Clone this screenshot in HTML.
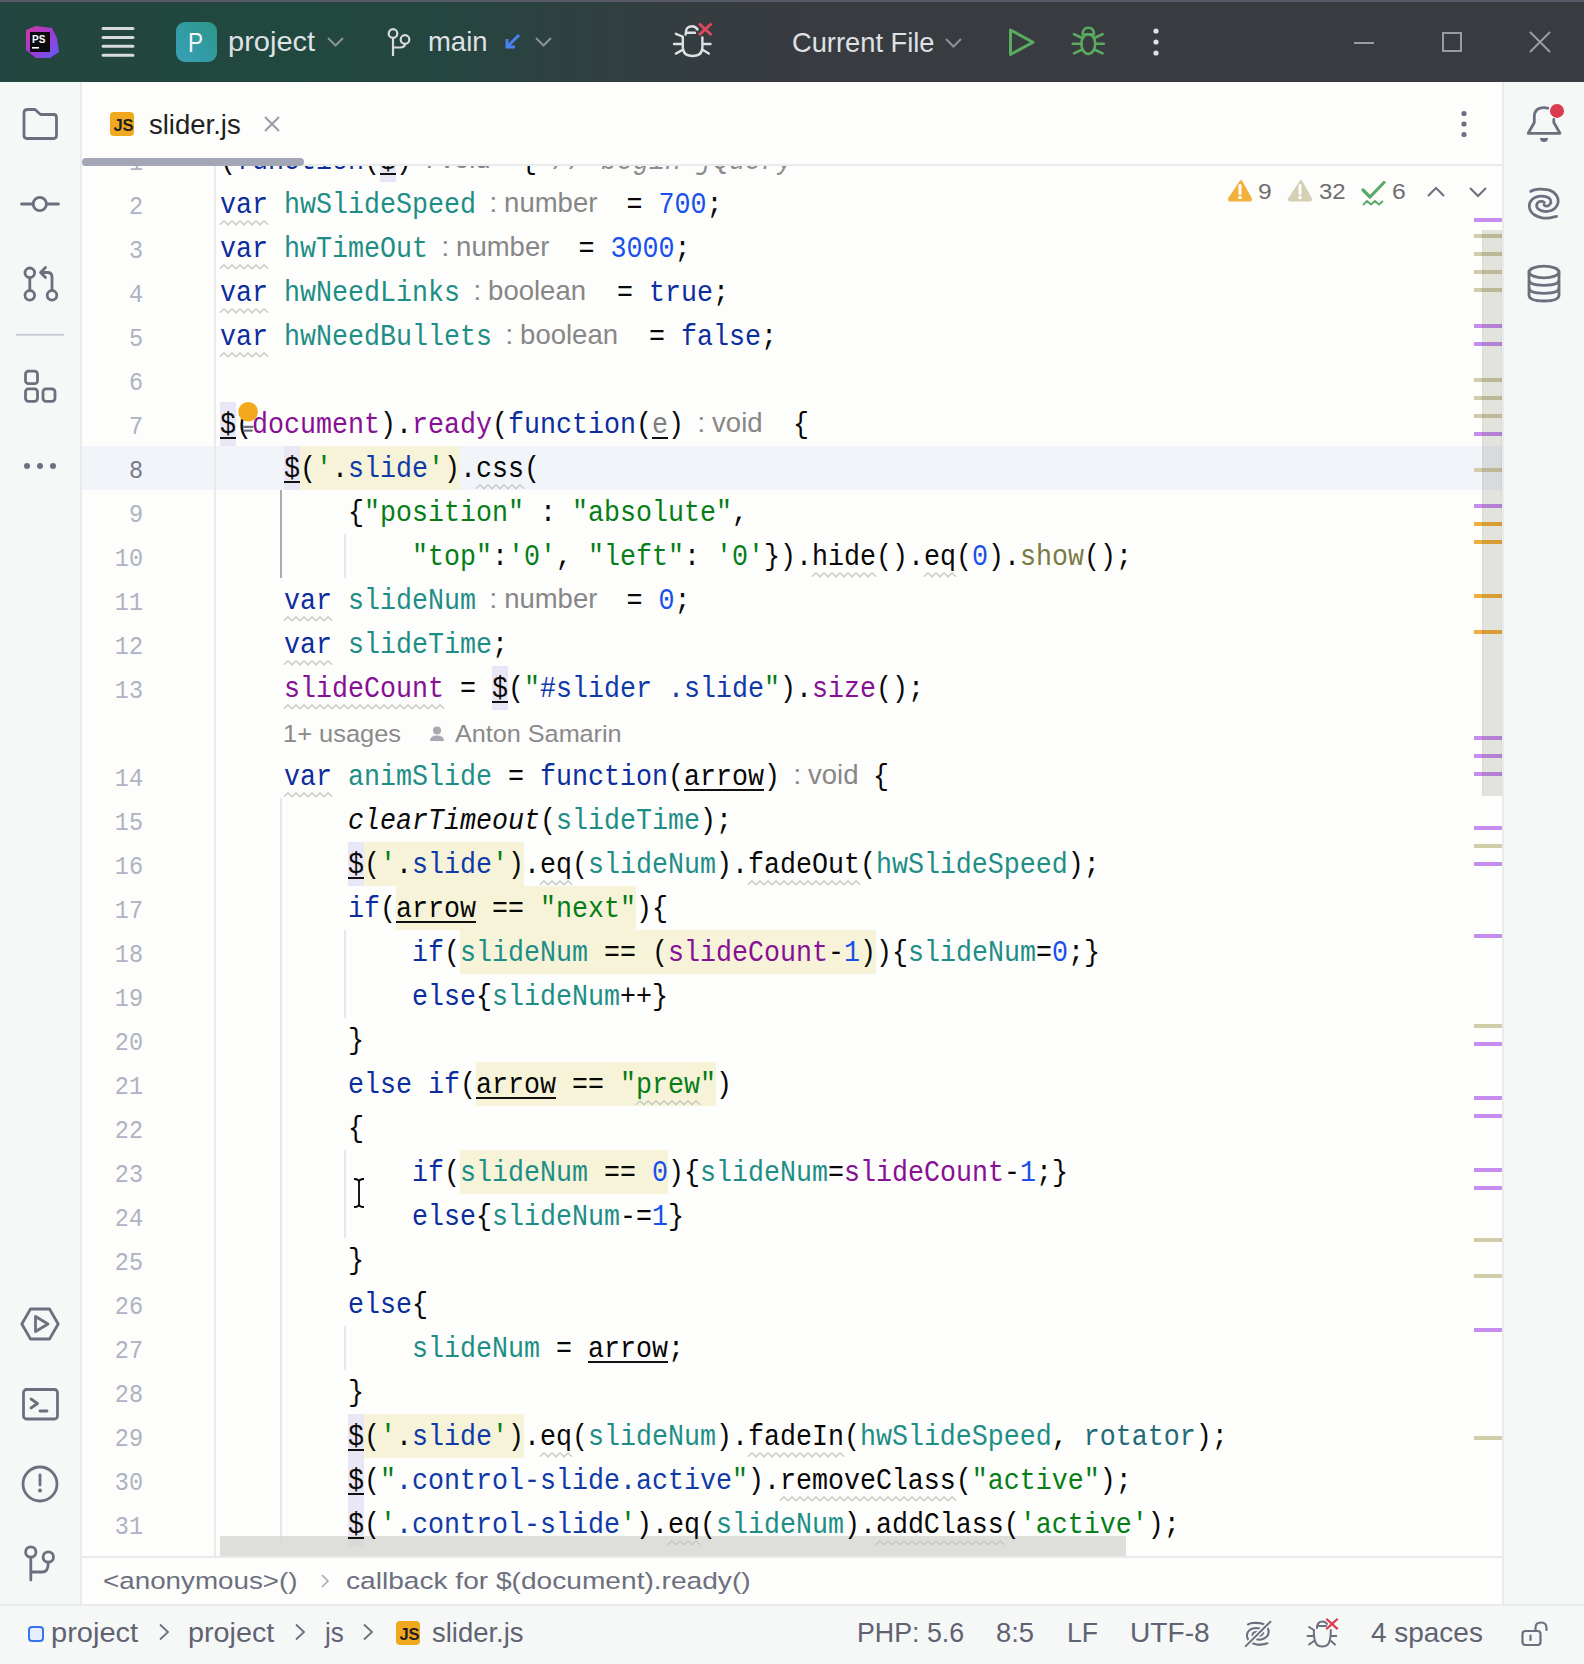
<!DOCTYPE html><html><head><meta charset="utf-8"><style>
*{margin:0;padding:0;box-sizing:border-box}
html,body{width:1584px;height:1664px;overflow:hidden;background:#fdfdfb;font-family:"Liberation Sans",sans-serif}
.a{position:absolute}
svg.a{overflow:visible}
#top{left:0;top:0;width:1584px;height:82px;background:linear-gradient(90deg,#23453f 0px,#21483f 300px,#254640 440px,#2d4140 560px,#343d40 680px,#383b40 800px,#393b40 1584px)}
#topline{left:0;top:0;width:1584px;height:2px;background:#585b66}
.ht{color:#dfe1e5;font-size:27px;line-height:27px;white-space:pre}
#lsb{left:0;top:82px;width:82px;height:1522px;background:#f6f7f7;border-right:2px solid #e9eaeb}
#rsb{left:1502px;top:82px;width:82px;height:1522px;background:#f6f7f7;border-left:2px solid #e9eaeb}
#tabs{left:82px;top:82px;width:1420px;height:84px;background:#fdfdfb;border-bottom:2px solid #e9eaeb}
#editor{left:82px;top:166px;width:1420px;height:1390px;background:#fdfdfb;overflow:hidden}
#crumbs{left:82px;top:1556px;width:1420px;height:48px;background:#fdfdfb;border-top:2px solid #e9eaeb}
#status{left:0;top:1604px;width:1584px;height:60px;background:#f6f7f7;border-top:2px solid #e9eaeb}
.st{font-size:26.5px;color:#5f6371;line-height:27px;white-space:pre}
.ln{position:absolute;width:60px;text-align:right;font-family:"Liberation Mono",monospace;font-size:23.5px;color:#aeb3c2;line-height:44px;transform-origin:0 28.3px;transform:translate(1px,2.5px) scaleY(1.13)}
.cl{position:absolute;left:139px;height:44px;line-height:44px;font-family:"Liberation Mono",monospace;font-size:26.667px;color:#080808;white-space:pre;transform-origin:0 29.1px;transform:scaleY(1.1)}
.un{color:#7f7f7f}.k{color:#0c2d9e}.g{color:#1d8e86}.n{color:#1750eb}.s{color:#067d17}.p{color:#871094}.sel{color:#0f3aa8}.ol{color:#7a7a43}.rt{color:#1f6b78}
.it{font-style:italic}
.hint{display:inline-block;font-family:"Liberation Sans",sans-serif;font-size:27.5px;color:#878787;vertical-align:top;padding-left:13.5px;position:relative;top:-3px;transform-origin:0 29px;transform:scaleY(0.909)}.hc{margin-right:7px}.cm{color:#8c8c8c;font-style:italic}
.ul{text-decoration:underline;text-underline-offset:5px;text-decoration-thickness:1.5px}
.bgy{background:#f6f2d6}
.bgl{background:#e8e5f5}

</style></head><body>
<div id="top" class="a"></div><div id="topline" class="a"></div>
<svg class="a" style="left:22px;top:24px" width="38" height="36" viewBox="0 0 38 36">
<defs><linearGradient id="psg" x1="0" y1="0" x2="1" y2="1"><stop offset="0" stop-color="#d33a9a"/><stop offset="0.5" stop-color="#9f3ad8"/><stop offset="1" stop-color="#5c5ef0"/></linearGradient></defs>
<path d="M4 6 L14 2 L30 4 L35 14 L37 28 L28 34 L14 34 L4 26 Z" fill="url(#psg)"/>
<rect x="8" y="8" width="20" height="20" fill="#0a0a0f"/>
<text x="10" y="18.5" font-family="Liberation Sans" font-weight="bold" font-size="10" fill="#fff">PS</text>
<rect x="10" y="23" width="7" height="1.6" fill="#fff"/>
</svg>
<svg class="a" style="left:100px;top:26px" width="36" height="32"><g stroke="#d9dade" stroke-width="3" stroke-linecap="round"><path d="M3 2.5H33M3 11.5H33M3 20.3H33M3 29.2H33"/></g></svg>
<div class="a" style="left:176px;top:22px;width:41px;height:40px;border-radius:9px;background:linear-gradient(45deg,#3aa0b8,#2b968a)"></div>

<div class="a" style="left:188.25px;top:28.52px;font-family:'Liberation Sans';font-size:27.5px;line-height:27.5px;color:#f4f6f8;white-space:pre;transform-origin:0 0;transform:scaleX(0.8199);">P</div>
<div class="a" style="left:227.83px;top:28.30px;font-family:'Liberation Sans';font-size:28px;line-height:28px;color:#dfe1e5;white-space:pre;transform-origin:0 0;transform:scaleX(1.0374);">project</div>
<svg class="a" style="left:326px;top:36px" width="20" height="12"><path d="M2 2 L9.5 9.5 L17 2" fill="none" stroke="#8d9097" stroke-width="2"/></svg>
<svg class="a" style="left:384px;top:26px" width="30" height="32"><g fill="none" stroke="#d9dade" stroke-width="2.2"><circle cx="9" cy="7.5" r="4.3"/><circle cx="21" cy="13.5" r="4.3"/><path d="M9 12 V30 M9 21.5 H16 Q21 21.5 21 17.8"/></g></svg>
<div class="a" style="left:427.88px;top:27.80px;font-family:'Liberation Sans';font-size:28px;line-height:28px;color:#dfe1e5;white-space:pre;transform-origin:0 0;transform:scaleX(0.9805);">main</div>
<svg class="a" style="left:503px;top:32px" width="20" height="18"><path d="M16 3 L5 14 M4 7 V15 H12" fill="none" stroke="#4a82f0" stroke-width="3"/></svg>
<svg class="a" style="left:534px;top:36px" width="20" height="12"><path d="M2 2 L9.5 9.5 L17 2" fill="none" stroke="#8d9097" stroke-width="2"/></svg>
<svg class="a" style="left:670px;top:20px" width="46" height="42"><g fill="none" stroke="#dfe1e5" stroke-width="2.4" stroke-linecap="round">
<path d="M12.8 17 V27 Q12.8 36 22.6 36 Q32.4 36 32.4 27 V17.5"/>
<path d="M15.6 14.5 Q15.4 6.3 22 6.3 Q25.5 6.3 27.5 9.5 M17.5 12.8 H25"/>
<path d="M4 24 H12.6 M33 24 H40.5 M5.9 13.8 L12.4 16.5 M5.9 33.6 L12.3 30 M33 30 L38.8 33.6"/></g>
<path d="M29 3.5 L41.5 15 M41.5 3.5 L29 15" stroke="#e0475e" stroke-width="3"/></svg>
<div class="a" style="left:791.81px;top:28.62px;font-family:'Liberation Sans';font-size:27.5px;line-height:27.5px;color:#dfe1e5;white-space:pre;transform-origin:0 0;transform:scaleX(0.9920);">Current File</div>
<svg class="a" style="left:944px;top:37px" width="20" height="12"><path d="M2 2 L9.5 9.5 L17 2" fill="none" stroke="#8d9097" stroke-width="2"/></svg>
<svg class="a" style="left:1006px;top:26px" width="32" height="32"><path d="M4.5 4 L4.5 28.5 L27 16.2 Z" fill="none" stroke="#5aab61" stroke-width="3" stroke-linejoin="round"/></svg>
<svg class="a" style="left:1070px;top:25px" width="38" height="34"><g fill="none" stroke="#5aab61" stroke-width="2.6" stroke-linecap="round" stroke-linejoin="round">
<ellipse cx="18.3" cy="19.1" rx="6.9" ry="9.9"/>
<path d="M12.6 9.5 Q12.6 2.8 18.3 2.8 Q24 2.8 24 9.5 Z"/>
<path d="M4 9.2 L11.7 12.8 M2.7 18.8 H11.5 M4 28.4 L11.7 24.8 M32.6 9.2 L24.9 12.8 M33.9 18.8 H25.1 M32.6 28.4 L24.9 24.8"/></g></svg>
<svg class="a" style="left:1150px;top:26px" width="12" height="32"><g fill="#dfe1e5"><circle cx="6" cy="5" r="2.6"/><circle cx="6" cy="16" r="2.6"/><circle cx="6" cy="27" r="2.6"/></g></svg>
<div class="a" style="left:1354px;top:42px;width:20px;height:2px;background:#9a9ca3"></div>
<div class="a" style="left:1442px;top:32px;width:20px;height:20px;border:2px solid #9a9ca3"></div>
<svg class="a" style="left:1528px;top:30px" width="24" height="24"><path d="M2 2 L22 22 M22 2 L2 22" stroke="#9a9ca3" stroke-width="2"/></svg>
<div id="lsb" class="a"></div><div id="rsb" class="a"></div><div id="tabs" class="a"></div>
<svg class="a" style="left:0;top:82px" width="80" height="1522"><g fill="none" stroke="#6c707e" stroke-width="2.8" stroke-linecap="round" stroke-linejoin="round">
<path d="M24 31 Q24 27.5 27.5 27.5 H35 L40.5 32.5 H53.5 Q56.5 32.5 56.5 35.5 V53.5 Q56.5 56.5 53.5 56.5 H27 Q24 56.5 24 53.5 Z"/>
<path d="M21.5 122 H33 M46.5 122 H58.5"/><circle cx="39.8" cy="122" r="6.6"/>
<circle cx="29.8" cy="190.8" r="4.8"/><circle cx="29.8" cy="213.3" r="4.8"/><circle cx="52" cy="213.3" r="4.8"/>
<path d="M29.8 195.6 V208.5 M52 208.5 V195 Q52 190.5 47.5 190.5 H41 M45.5 185.5 L40.5 190.5 L45.5 195.5"/>
<rect x="25.5" y="289.2" width="12" height="12.5" rx="3"/><rect x="25.5" y="306.8" width="12" height="12.5" rx="3"/><rect x="43" y="306.8" width="12" height="12.5" rx="3"/>
<path d="M21.8 1242 L30.5 1227 H49.5 L58.2 1242 L49.5 1257 H30.5 Z"/><path d="M35.5 1234.5 V1249.5 L48 1242 Z"/>
<rect x="23.5" y="1307.5" width="34" height="29.5" rx="3"/><path d="M31 1317 L37.5 1321.5 L31 1326 M40 1329 H47"/>
<circle cx="40" cy="1402" r="17"/><path d="M40 1393 V1403"/>
<circle cx="30.8" cy="1470" r="5.2"/><circle cx="48.3" cy="1475" r="5.2"/><path d="M30.8 1475.2 V1498 M30.8 1490 H42.5 Q48.3 1490 48.3 1480.2"/>
</g>
<path d="M16 252.8 H64" stroke="#c9ccd6" stroke-width="2"/>
<g fill="#6c707e"><circle cx="27" cy="384" r="3"/><circle cx="40" cy="384" r="3"/><circle cx="53" cy="384" r="3"/><circle cx="40" cy="1408.5" r="2"/></g>
</svg>
<svg class="a" style="left:1502px;top:82px" width="82" height="1522"><g fill="none" stroke="#6c707e" stroke-width="2.8" stroke-linecap="round" stroke-linejoin="round">
<path d="M45.8 26.2 Q43.5 25.6 42 25.6 Q32.3 25.6 32.3 35 V40.5 L26.2 51.3 H58 L51.8 40.5 V37.5"/>
<path d="M42.31 120.57 C41.94 120.38 41.00 119.59 40.10 119.46 C39.20 119.33 37.84 119.25 36.94 119.78 C36.04 120.31 34.94 121.52 34.73 122.62 C34.52 123.73 34.78 125.36 35.68 126.41 C36.58 127.46 38.31 128.46 40.10 128.93 C41.89 129.40 44.31 129.67 46.41 129.25 C48.51 128.83 51.09 127.94 52.72 126.41 C54.35 124.88 55.93 122.31 56.19 120.10 C56.45 117.89 55.67 115.10 54.30 113.15 C52.93 111.20 50.62 109.42 47.99 108.42 C45.36 107.42 41.15 107.26 38.52 107.15 C35.89 107.05 33.83 107.42 32.20 107.79 C30.57 108.16 29.31 109.10 28.73 109.36"/>
<path d="M41.99 122.94 C42.36 123.15 43.36 124.15 44.20 124.20 C45.04 124.25 46.25 123.93 47.04 123.25 C47.83 122.57 48.88 121.26 48.93 120.10 C48.98 118.94 48.41 117.26 47.36 116.31 C46.31 115.36 44.46 114.73 42.62 114.41 C40.78 114.09 38.31 113.99 36.31 114.41 C34.31 114.83 32.10 115.68 30.63 116.94 C29.16 118.20 27.89 120.15 27.47 121.99 C27.05 123.83 27.31 126.20 28.10 127.99 C28.89 129.78 30.20 131.41 32.20 132.72 C34.20 134.03 37.47 135.35 40.10 135.88 C42.73 136.41 45.57 136.14 47.99 135.88 C50.41 135.62 53.52 134.56 54.62 134.30"/>
<ellipse cx="42" cy="190" rx="15" ry="5.8"/><path d="M27 190 V213 Q27 219 42 219 Q57 219 57 213 V190 M27 197.5 Q27 203.3 42 203.3 Q57 203.3 57 197.5 M27 205.5 Q27 211.3 42 211.3 Q57 211.3 57 205.5"/>
</g>
<path d="M38 56 H46 Q46 60 42 60 Q38 60 38 56 Z" fill="#6c707e"/>
<circle cx="55" cy="28.9" r="7" fill="#db3b4b"/>
</svg>
<div id="ed" class="a" style="left:82px;top:166px;width:1420px;height:1390px;overflow:hidden"><div class="a" style="left:-82px;top:-166px;width:1584px;height:1664px">
<div class="a" style="left:82px;top:446px;width:1420px;height:44px;background:#f1f4f8"></div>
<div class="a" style="left:214px;top:0;width:2px;height:1664px;background:#e9eaeb"></div>
<div class="a" style="left:380.0px;top:138px;width:16.0px;height:44px;background:#e9e6f5"></div><div class="a" style="left:220px;top:402px;width:16.0px;height:44px;background:#e9e6f5"></div><div class="a" style="left:284.0px;top:446px;width:16.0px;height:44px;background:#e9e6f5"></div><div class="a" style="left:300.0px;top:446px;width:160.0px;height:44px;background:#f6f3d9"></div><div class="a" style="left:492.0px;top:666px;width:16.0px;height:44px;background:#e9e6f5"></div><div class="a" style="left:348.0px;top:842px;width:16.0px;height:44px;background:#e9e6f5"></div><div class="a" style="left:364.0px;top:842px;width:160.0px;height:44px;background:#f6f3d9"></div><div class="a" style="left:396.0px;top:886px;width:240.0px;height:44px;background:#f6f3d9"></div><div class="a" style="left:460.0px;top:930px;width:416.0px;height:44px;background:#f6f3d9"></div><div class="a" style="left:476.0px;top:1062px;width:240.0px;height:44px;background:#f6f3d9"></div><div class="a" style="left:460.0px;top:1150px;width:208.0px;height:44px;background:#f6f3d9"></div><div class="a" style="left:348.0px;top:1414px;width:16.0px;height:44px;background:#e9e6f5"></div><div class="a" style="left:364.0px;top:1414px;width:160.0px;height:44px;background:#f6f3d9"></div><div class="a" style="left:348.0px;top:1458px;width:16.0px;height:44px;background:#e9e6f5"></div><div class="a" style="left:348.0px;top:1502px;width:16.0px;height:44px;background:#e9e6f5"></div>
<div class="a" style="left:280px;top:490px;width:2px;height:88px;background:#a8abb6"></div>
<div class="a" style="left:344px;top:534px;width:2px;height:44px;background:#e6e7ea"></div>
<div class="a" style="left:280px;top:798px;width:2px;height:748px;background:#e6e7ea"></div>
<div class="a" style="left:344px;top:930px;width:2px;height:88px;background:#e6e7ea"></div>
<div class="a" style="left:344px;top:1150px;width:2px;height:88px;background:#e6e7ea"></div>
<div class="a" style="left:344px;top:1326px;width:2px;height:44px;background:#e6e7ea"></div>
<div class="ln" style="left:82px;top:140px;color:#aeb3c2">1</div>
<div class="ln" style="left:82px;top:184px;color:#aeb3c2">2</div>
<div class="ln" style="left:82px;top:228px;color:#aeb3c2">3</div>
<div class="ln" style="left:82px;top:272px;color:#aeb3c2">4</div>
<div class="ln" style="left:82px;top:316px;color:#aeb3c2">5</div>
<div class="ln" style="left:82px;top:360px;color:#aeb3c2">6</div>
<div class="ln" style="left:82px;top:404px;color:#aeb3c2">7</div>
<div class="ln" style="left:82px;top:448px;color:#767a8a">8</div>
<div class="ln" style="left:82px;top:492px;color:#aeb3c2">9</div>
<div class="ln" style="left:82px;top:536px;color:#aeb3c2">10</div>
<div class="ln" style="left:82px;top:580px;color:#aeb3c2">11</div>
<div class="ln" style="left:82px;top:624px;color:#aeb3c2">12</div>
<div class="ln" style="left:82px;top:668px;color:#aeb3c2">13</div>
<div class="ln" style="left:82px;top:756px;color:#aeb3c2">14</div>
<div class="ln" style="left:82px;top:800px;color:#aeb3c2">15</div>
<div class="ln" style="left:82px;top:844px;color:#aeb3c2">16</div>
<div class="ln" style="left:82px;top:888px;color:#aeb3c2">17</div>
<div class="ln" style="left:82px;top:932px;color:#aeb3c2">18</div>
<div class="ln" style="left:82px;top:976px;color:#aeb3c2">19</div>
<div class="ln" style="left:82px;top:1020px;color:#aeb3c2">20</div>
<div class="ln" style="left:82px;top:1064px;color:#aeb3c2">21</div>
<div class="ln" style="left:82px;top:1108px;color:#aeb3c2">22</div>
<div class="ln" style="left:82px;top:1152px;color:#aeb3c2">23</div>
<div class="ln" style="left:82px;top:1196px;color:#aeb3c2">24</div>
<div class="ln" style="left:82px;top:1240px;color:#aeb3c2">25</div>
<div class="ln" style="left:82px;top:1284px;color:#aeb3c2">26</div>
<div class="ln" style="left:82px;top:1328px;color:#aeb3c2">27</div>
<div class="ln" style="left:82px;top:1372px;color:#aeb3c2">28</div>
<div class="ln" style="left:82px;top:1416px;color:#aeb3c2">29</div>
<div class="ln" style="left:82px;top:1460px;color:#aeb3c2">30</div>
<div class="ln" style="left:82px;top:1504px;color:#aeb3c2">31</div>
<div class="a" style="left:220px;top:1536px;width:906px;height:20px;background:rgba(214,214,211,0.8)"></div>
<div class="cl" style="left:220px;top:140.4px">(<span class="k">function</span>($)<span class="hint" style="width:93px"><span class="hc">:</span>void</span> {<span class="cm"> // begin jQuery</span></div><div class="cl" style="left:220px;top:184.4px"><span class="k">var</span> <span class="g">hwSlideSpeed</span><span class="hint" style="width:134.5px"><span class="hc">:</span>number</span> = <span class="n">700</span>;</div><div class="cl" style="left:220px;top:228.4px"><span class="k">var</span> <span class="g">hwTimeOut</span><span class="hint" style="width:134.5px"><span class="hc">:</span>number</span> = <span class="n">3000</span>;</div><div class="cl" style="left:220px;top:272.4px"><span class="k">var</span> <span class="g">hwNeedLinks</span><span class="hint" style="width:141px"><span class="hc">:</span>boolean</span> = <span class="k">true</span>;</div><div class="cl" style="left:220px;top:316.4px"><span class="k">var</span> <span class="g">hwNeedBullets</span><span class="hint" style="width:141px"><span class="hc">:</span>boolean</span> = <span class="k">false</span>;</div><div class="cl" style="left:220px;top:360.4px"></div><div class="cl" style="left:220px;top:404.4px">$(<span class="p">document</span>).<span class="p">ready</span>(<span class="k">function</span>(<span class="un">e</span>)<span class="hint" style="width:93px"><span class="hc">:</span>void</span> {</div><div class="cl" style="left:220px;top:448.4px">    $(<span class="s">&#x27;</span>.<span class="sel">slide</span><span class="s">&#x27;</span>).css(</div><div class="cl" style="left:220px;top:492.4px">        {<span class="s">&quot;position&quot;</span> : <span class="s">&quot;absolute&quot;</span>,</div><div class="cl" style="left:220px;top:536.4px">            <span class="s">&quot;top&quot;</span>:<span class="s">&#x27;0&#x27;</span>, <span class="s">&quot;left&quot;</span>: <span class="s">&#x27;0&#x27;</span>}).hide().eq(<span class="n">0</span>).<span class="ol">show</span>();</div><div class="cl" style="left:220px;top:580.4px">    <span class="k">var</span> <span class="g">slideNum</span><span class="hint" style="width:134.5px"><span class="hc">:</span>number</span> = <span class="n">0</span>;</div><div class="cl" style="left:220px;top:624.4px">    <span class="k">var</span> <span class="g">slideTime</span>;</div><div class="cl" style="left:220px;top:668.4px">    <span class="p">slideCount</span> = $(<span class="s">&quot;</span><span class="sel">#slider .slide</span><span class="s">&quot;</span>).<span class="p">size</span>();</div><div class="cl" style="left:220px;top:756.4px">    <span class="k">var</span> <span class="g">animSlide</span> = <span class="k">function</span>(arrow)<span class="hint" style="width:93px"><span class="hc">:</span>void</span>{</div><div class="cl" style="left:220px;top:800.4px">        <span class="it">clearTimeout</span>(<span class="g">slideTime</span>);</div><div class="cl" style="left:220px;top:844.4px">        $(<span class="s">&#x27;</span>.<span class="sel">slide</span><span class="s">&#x27;</span>).eq(<span class="g">slideNum</span>).fadeOut(<span class="g">hwSlideSpeed</span>);</div><div class="cl" style="left:220px;top:888.4px">        <span class="k">if</span>(arrow == <span class="s">&quot;next&quot;</span>){</div><div class="cl" style="left:220px;top:932.4px">            <span class="k">if</span>(<span class="g">slideNum</span> == (<span class="p">slideCount</span>-<span class="n">1</span>)){<span class="g">slideNum</span>=<span class="n">0</span>;}</div><div class="cl" style="left:220px;top:976.4px">            <span class="k">else</span>{<span class="g">slideNum</span>++}</div><div class="cl" style="left:220px;top:1020.4px">        }</div><div class="cl" style="left:220px;top:1064.4px">        <span class="k">else</span> <span class="k">if</span>(arrow == <span class="s">&quot;</span><span class="s">prew</span><span class="s">&quot;</span>)</div><div class="cl" style="left:220px;top:1108.4px">        {</div><div class="cl" style="left:220px;top:1152.4px">            <span class="k">if</span>(<span class="g">slideNum</span> == <span class="n">0</span>){<span class="g">slideNum</span>=<span class="p">slideCount</span>-<span class="n">1</span>;}</div><div class="cl" style="left:220px;top:1196.4px">            <span class="k">else</span>{<span class="g">slideNum</span>-=<span class="n">1</span>}</div><div class="cl" style="left:220px;top:1240.4px">        }</div><div class="cl" style="left:220px;top:1284.4px">        <span class="k">else</span>{</div><div class="cl" style="left:220px;top:1328.4px">            <span class="g">slideNum</span> = arrow;</div><div class="cl" style="left:220px;top:1372.4px">        }</div><div class="cl" style="left:220px;top:1416.4px">        $(<span class="s">&#x27;</span>.<span class="sel">slide</span><span class="s">&#x27;</span>).eq(<span class="g">slideNum</span>).fadeIn(<span class="g">hwSlideSpeed</span>, <span class="rt">rotator</span>);</div><div class="cl" style="left:220px;top:1460.4px">        $(<span class="s">&quot;</span><span class="sel">.control-slide.active</span><span class="s">&quot;</span>).removeClass(<span class="s">&quot;active&quot;</span>);</div><div class="cl" style="left:220px;top:1504.4px">        $(<span class="s">&#x27;</span><span class="sel">.control-slide</span><span class="s">&#x27;</span>).eq(<span class="g">slideNum</span>).addClass(<span class="s">&#x27;active&#x27;</span>);</div>
<div class="a" style="left:380.0px;top:173.3px;width:16.0px;height:1.3px;background:#111"></div><div class="a" style="left:220px;top:437.3px;width:16.0px;height:1.3px;background:#111"></div><div class="a" style="left:652.0px;top:437.3px;width:16.0px;height:1.3px;background:#111"></div><div class="a" style="left:284.0px;top:481.3px;width:16.0px;height:1.3px;background:#111"></div><div class="a" style="left:492.0px;top:701.3px;width:16.0px;height:1.3px;background:#111"></div><div class="a" style="left:684.0px;top:789.3px;width:80.0px;height:1.3px;background:#111"></div><div class="a" style="left:348.0px;top:877.3px;width:16.0px;height:1.3px;background:#111"></div><div class="a" style="left:396.0px;top:921.3px;width:80.0px;height:1.3px;background:#111"></div><div class="a" style="left:476.0px;top:1097.3px;width:80.0px;height:1.3px;background:#111"></div><div class="a" style="left:588.0px;top:1361.3px;width:80.0px;height:1.3px;background:#111"></div><div class="a" style="left:348.0px;top:1449.3px;width:16.0px;height:1.3px;background:#111"></div><div class="a" style="left:348.0px;top:1493.3px;width:16.0px;height:1.3px;background:#111"></div><div class="a" style="left:348.0px;top:1537.3px;width:16.0px;height:1.3px;background:#111"></div>
<svg class="a" style="left:0;top:0" width="1584" height="1664"><g fill="none" stroke="#c3c7c3" stroke-width="1.25"><path d="M220 224.8 L224 220.8 L228 224.8 L232 220.8 L236 224.8 L240 220.8 L244 224.8 L248 220.8 L252 224.8 L256 220.8 L260 224.8 L264 220.8 L268 224.8"/><path d="M220 268.8 L224 264.8 L228 268.8 L232 264.8 L236 268.8 L240 264.8 L244 268.8 L248 264.8 L252 268.8 L256 264.8 L260 268.8 L264 264.8 L268 268.8"/><path d="M220 312.8 L224 308.8 L228 312.8 L232 308.8 L236 312.8 L240 308.8 L244 312.8 L248 308.8 L252 312.8 L256 308.8 L260 312.8 L264 308.8 L268 312.8"/><path d="M220 356.8 L224 352.8 L228 356.8 L232 352.8 L236 356.8 L240 352.8 L244 356.8 L248 352.8 L252 356.8 L256 352.8 L260 356.8 L264 352.8 L268 356.8"/><path d="M476.0 488.8 L480.0 484.8 L484.0 488.8 L488.0 484.8 L492.0 488.8 L496.0 484.8 L500.0 488.8 L504.0 484.8 L508.0 488.8 L512.0 484.8 L516.0 488.8 L520.0 484.8 L524.0 488.8"/><path d="M812.0 576.8 L816.0 572.8 L820.0 576.8 L824.0 572.8 L828.0 576.8 L832.0 572.8 L836.0 576.8 L840.0 572.8 L844.0 576.8 L848.0 572.8 L852.0 576.8 L856.0 572.8 L860.0 576.8 L864.0 572.8 L868.0 576.8 L872.0 572.8 L876.0 576.8"/><path d="M924.0 576.8 L928.0 572.8 L932.0 576.8 L936.0 572.8 L940.0 576.8 L944.0 572.8 L948.0 576.8 L952.0 572.8 L956.0 576.8"/><path d="M284.0 620.8 L288.0 616.8 L292.0 620.8 L296.0 616.8 L300.0 620.8 L304.0 616.8 L308.0 620.8 L312.0 616.8 L316.0 620.8 L320.0 616.8 L324.0 620.8 L328.0 616.8 L332.0 620.8"/><path d="M284.0 664.8 L288.0 660.8 L292.0 664.8 L296.0 660.8 L300.0 664.8 L304.0 660.8 L308.0 664.8 L312.0 660.8 L316.0 664.8 L320.0 660.8 L324.0 664.8 L328.0 660.8 L332.0 664.8"/><path d="M284.0 708.8 L288.0 704.8 L292.0 708.8 L296.0 704.8 L300.0 708.8 L304.0 704.8 L308.0 708.8 L312.0 704.8 L316.0 708.8 L320.0 704.8 L324.0 708.8 L328.0 704.8 L332.0 708.8 L336.0 704.8 L340.0 708.8 L344.0 704.8 L348.0 708.8 L352.0 704.8 L356.0 708.8 L360.0 704.8 L364.0 708.8 L368.0 704.8 L372.0 708.8 L376.0 704.8 L380.0 708.8 L384.0 704.8 L388.0 708.8 L392.0 704.8 L396.0 708.8 L400.0 704.8 L404.0 708.8 L408.0 704.8 L412.0 708.8 L416.0 704.8 L420.0 708.8 L424.0 704.8 L428.0 708.8 L432.0 704.8 L436.0 708.8 L440.0 704.8 L444.0 708.8"/><path d="M284.0 796.8 L288.0 792.8 L292.0 796.8 L296.0 792.8 L300.0 796.8 L304.0 792.8 L308.0 796.8 L312.0 792.8 L316.0 796.8 L320.0 792.8 L324.0 796.8 L328.0 792.8 L332.0 796.8"/><path d="M540.0 884.8 L544.0 880.8 L548.0 884.8 L552.0 880.8 L556.0 884.8 L560.0 880.8 L564.0 884.8 L568.0 880.8 L572.0 884.8"/><path d="M748.0 884.8 L752.0 880.8 L756.0 884.8 L760.0 880.8 L764.0 884.8 L768.0 880.8 L772.0 884.8 L776.0 880.8 L780.0 884.8 L784.0 880.8 L788.0 884.8 L792.0 880.8 L796.0 884.8 L800.0 880.8 L804.0 884.8 L808.0 880.8 L812.0 884.8 L816.0 880.8 L820.0 884.8 L824.0 880.8 L828.0 884.8 L832.0 880.8 L836.0 884.8 L840.0 880.8 L844.0 884.8 L848.0 880.8 L852.0 884.8 L856.0 880.8 L860.0 884.8"/><path d="M636.0 1104.8 L640.0 1100.8 L644.0 1104.8 L648.0 1100.8 L652.0 1104.8 L656.0 1100.8 L660.0 1104.8 L664.0 1100.8 L668.0 1104.8 L672.0 1100.8 L676.0 1104.8 L680.0 1100.8 L684.0 1104.8 L688.0 1100.8 L692.0 1104.8 L696.0 1100.8 L700.0 1104.8"/><path d="M540.0 1456.8 L544.0 1452.8 L548.0 1456.8 L552.0 1452.8 L556.0 1456.8 L560.0 1452.8 L564.0 1456.8 L568.0 1452.8 L572.0 1456.8"/><path d="M748.0 1456.8 L752.0 1452.8 L756.0 1456.8 L760.0 1452.8 L764.0 1456.8 L768.0 1452.8 L772.0 1456.8 L776.0 1452.8 L780.0 1456.8 L784.0 1452.8 L788.0 1456.8 L792.0 1452.8 L796.0 1456.8 L800.0 1452.8 L804.0 1456.8 L808.0 1452.8 L812.0 1456.8 L816.0 1452.8 L820.0 1456.8 L824.0 1452.8 L828.0 1456.8 L832.0 1452.8 L836.0 1456.8 L840.0 1452.8 L844.0 1456.8"/><path d="M780.0 1500.8 L784.0 1496.8 L788.0 1500.8 L792.0 1496.8 L796.0 1500.8 L800.0 1496.8 L804.0 1500.8 L808.0 1496.8 L812.0 1500.8 L816.0 1496.8 L820.0 1500.8 L824.0 1496.8 L828.0 1500.8 L832.0 1496.8 L836.0 1500.8 L840.0 1496.8 L844.0 1500.8 L848.0 1496.8 L852.0 1500.8 L856.0 1496.8 L860.0 1500.8 L864.0 1496.8 L868.0 1500.8 L872.0 1496.8 L876.0 1500.8 L880.0 1496.8 L884.0 1500.8 L888.0 1496.8 L892.0 1500.8 L896.0 1496.8 L900.0 1500.8 L904.0 1496.8 L908.0 1500.8 L912.0 1496.8 L916.0 1500.8 L920.0 1496.8 L924.0 1500.8 L928.0 1496.8 L932.0 1500.8 L936.0 1496.8 L940.0 1500.8 L944.0 1496.8 L948.0 1500.8 L952.0 1496.8 L956.0 1500.8"/><path d="M668.0 1544.8 L672.0 1540.8 L676.0 1544.8 L680.0 1540.8 L684.0 1544.8 L688.0 1540.8 L692.0 1544.8 L696.0 1540.8 L700.0 1544.8"/><path d="M876.0 1544.8 L880.0 1540.8 L884.0 1544.8 L888.0 1540.8 L892.0 1544.8 L896.0 1540.8 L900.0 1544.8 L904.0 1540.8 L908.0 1544.8 L912.0 1540.8 L916.0 1544.8 L920.0 1540.8 L924.0 1544.8 L928.0 1540.8 L932.0 1544.8 L936.0 1540.8 L940.0 1544.8 L944.0 1540.8 L948.0 1544.8 L952.0 1540.8 L956.0 1544.8 L960.0 1540.8 L964.0 1544.8 L968.0 1540.8 L972.0 1544.8 L976.0 1540.8 L980.0 1544.8 L984.0 1540.8 L988.0 1544.8 L992.0 1540.8 L996.0 1544.8 L1000.0 1540.8 L1004.0 1544.8"/></g></svg>
<div class="a" style="left:282.56px;top:722.94px;font-family:'Liberation Sans';font-size:23.7px;line-height:23.7px;color:#8a8a8a;white-space:pre;transform-origin:0 0;transform:scaleX(1.0730);">1+ usages</div>
<svg class="a" style="left:428px;top:725px" width="18" height="18"><circle cx="9" cy="5.5" r="4" fill="#a7a9b0"/><path d="M2 16 Q2 10.5 9 10.5 Q16 10.5 16 16 Z" fill="#a7a9b0"/></svg>
<div class="a" style="left:454.95px;top:722.94px;font-family:'Liberation Sans';font-size:23.7px;line-height:23.7px;color:#8a8a8a;white-space:pre;transform-origin:0 0;transform:scaleX(1.0633);">Anton Samarin</div>
</div></div>
<div class="a" style="left:82px;top:166px;width:1420px;height:1390px;overflow:hidden"><div class="a" style="left:-82px;top:-166px;width:1584px;height:1664px">
<svg class="a" style="left:236px;top:400px" width="26" height="34"><circle cx="12.1" cy="11.7" r="9.8" fill="#f2a91e"/><path d="M7.8 26.8 H16.6 M8.5 30.6 H15.8" stroke="#6c707e" stroke-width="2.2" stroke-linecap="round"/></svg>
<svg class="a" style="left:1226px;top:178px" width="30" height="26"><path d="M14 2.5 Q15 1.5 16 2.5 L26 20.5 Q26.5 23.5 23.5 23.5 H4.5 Q1.5 23.5 2 20.5 Z" fill="#f2b13c"/><path d="M14 7.5 V15.5" stroke="#fff" stroke-width="3" stroke-linecap="round"/><circle cx="14" cy="19.5" r="1.8" fill="#fff"/></svg>
<div class="a" style="left:1257.84px;top:182.30px;font-family:'Liberation Sans';font-size:21.5px;line-height:21.5px;color:#6e6e6e;white-space:pre;transform-origin:0 0;transform:scaleX(1.1479);">9</div>
<svg class="a" style="left:1286px;top:178px" width="30" height="26"><path d="M14 2.5 Q15 1.5 16 2.5 L26 20.5 Q26.5 23.5 23.5 23.5 H4.5 Q1.5 23.5 2 20.5 Z" fill="#d5cfb3"/><path d="M14 7.5 V15.5" stroke="#fff" stroke-width="3" stroke-linecap="round"/><circle cx="14" cy="19.5" r="1.8" fill="#fff"/></svg>
<div class="a" style="left:1318.59px;top:182.30px;font-family:'Liberation Sans';font-size:21.5px;line-height:21.5px;color:#6e6e6e;white-space:pre;transform-origin:0 0;transform:scaleX(1.1129);">32</div>
<svg class="a" style="left:1360px;top:178px" width="28" height="30"><path d="M3 12 L10 19 L24 4.5" fill="none" stroke="#59a869" stroke-width="3.2" stroke-linecap="round" stroke-linejoin="round"/><path d="M3 27 L7 23 L11 26.5 L15 23 L19 26.5 L23 23" fill="none" stroke="#59a869" stroke-width="1.8"/></svg>
<div class="a" style="left:1391.75px;top:182.30px;font-family:'Liberation Sans';font-size:21.5px;line-height:21.5px;color:#6e6e6e;white-space:pre;transform-origin:0 0;transform:scaleX(1.1491);">6</div>
<svg class="a" style="left:1424px;top:184px" width="24" height="16"><path d="M4 12 L12 4 L20 12" fill="none" stroke="#6c707e" stroke-width="2"/></svg>
<svg class="a" style="left:1466px;top:184px" width="24" height="16"><path d="M4 4 L12 12 L20 4" fill="none" stroke="#6c707e" stroke-width="2"/></svg>
<div class="a" style="left:1474px;top:217.6px;width:28px;height:4px;background:#c68cf0"></div>
<div class="a" style="left:1474px;top:233.8px;width:28px;height:4px;background:#d3ccab"></div>
<div class="a" style="left:1474px;top:252.0px;width:28px;height:4px;background:#d3ccab"></div>
<div class="a" style="left:1474px;top:270.0px;width:28px;height:4px;background:#d3ccab"></div>
<div class="a" style="left:1474px;top:288.0px;width:28px;height:4px;background:#d3ccab"></div>
<div class="a" style="left:1474px;top:324.0px;width:28px;height:4px;background:#c68cf0"></div>
<div class="a" style="left:1474px;top:342.0px;width:28px;height:4px;background:#c68cf0"></div>
<div class="a" style="left:1474px;top:378.0px;width:28px;height:4px;background:#d3ccab"></div>
<div class="a" style="left:1474px;top:396.0px;width:28px;height:4px;background:#d3ccab"></div>
<div class="a" style="left:1474px;top:414.0px;width:28px;height:4px;background:#d3ccab"></div>
<div class="a" style="left:1474px;top:432.0px;width:28px;height:4px;background:#c68cf0"></div>
<div class="a" style="left:1474px;top:468.0px;width:28px;height:4px;background:#d3ccab"></div>
<div class="a" style="left:1474px;top:503.6px;width:28px;height:4px;background:#c68cf0"></div>
<div class="a" style="left:1474px;top:521.8px;width:28px;height:4px;background:#f0ae3c"></div>
<div class="a" style="left:1474px;top:539.9px;width:28px;height:4px;background:#f0ae3c"></div>
<div class="a" style="left:1474px;top:594.0px;width:28px;height:4px;background:#f0ae3c"></div>
<div class="a" style="left:1474px;top:630.0px;width:28px;height:4px;background:#f0ae3c"></div>
<div class="a" style="left:1474px;top:736.0px;width:28px;height:4px;background:#c68cf0"></div>
<div class="a" style="left:1474px;top:754.0px;width:28px;height:4px;background:#c68cf0"></div>
<div class="a" style="left:1474px;top:772.0px;width:28px;height:4px;background:#c68cf0"></div>
<div class="a" style="left:1474px;top:826.0px;width:28px;height:4px;background:#c68cf0"></div>
<div class="a" style="left:1474px;top:844.0px;width:28px;height:4px;background:#d3ccab"></div>
<div class="a" style="left:1474px;top:862.0px;width:28px;height:4px;background:#c68cf0"></div>
<div class="a" style="left:1474px;top:933.6px;width:28px;height:4px;background:#c68cf0"></div>
<div class="a" style="left:1474px;top:1023.7px;width:28px;height:4px;background:#d3ccab"></div>
<div class="a" style="left:1474px;top:1041.8px;width:28px;height:4px;background:#c68cf0"></div>
<div class="a" style="left:1474px;top:1095.8px;width:28px;height:4px;background:#c68cf0"></div>
<div class="a" style="left:1474px;top:1113.9px;width:28px;height:4px;background:#c68cf0"></div>
<div class="a" style="left:1474px;top:1167.6px;width:28px;height:4px;background:#c68cf0"></div>
<div class="a" style="left:1474px;top:1185.7px;width:28px;height:4px;background:#c68cf0"></div>
<div class="a" style="left:1474px;top:1237.7px;width:28px;height:4px;background:#d3ccab"></div>
<div class="a" style="left:1474px;top:1274.0px;width:28px;height:4px;background:#d3ccab"></div>
<div class="a" style="left:1474px;top:1327.6px;width:28px;height:4px;background:#c68cf0"></div>
<div class="a" style="left:1474px;top:1435.6px;width:28px;height:4px;background:#d3ccab"></div>
<div class="a" style="left:1482px;top:230px;width:20px;height:566px;background:rgba(40,40,20,0.12);border-left:1.5px solid rgba(0,0,0,0.04);border-right:1.5px solid rgba(0,0,0,0.04)"></div>
<svg class="a" style="left:350px;top:1174px" width="18" height="40"><g fill="none" stroke-linecap="butt"><path d="M4 5 Q9 5 9 8 Q9 5 14 5 M9 8 V30 M4 33 Q9 33 9 30 Q9 33 14 33" stroke="#fff" stroke-width="4"/><path d="M4 5 Q9 5 9 8 Q9 5 14 5 M9 8 V30 M4 33 Q9 33 9 30 Q9 33 14 33" stroke="#000" stroke-width="1.8"/></g></svg>
</div></div>
<div class="a" style="left:110px;top:112px;width:24px;height:24px;border-radius:4px;background:#f0a91e"></div>
<div class="a" style="left:113.5px;top:117px;font-size:16.5px;line-height:16.5px;font-weight:bold;color:#1e1e1e;letter-spacing:-0.3px">JS</div>
<div class="a" style="left:148.53px;top:112.14px;font-family:'Liberation Sans';font-size:27px;line-height:27px;color:#1f1f1f;white-space:pre;transform-origin:0 0;transform:scaleX(1.0190);">slider.js</div>
<svg class="a" style="left:262px;top:114px" width="20" height="20"><path d="M3 3 L17 17 M17 3 L3 17" stroke="#9a9ca6" stroke-width="2"/></svg>
<div class="a" style="left:82px;top:158px;width:222px;height:8px;border-radius:4px;background:#a3a6b4"></div>
<svg class="a" style="left:1458px;top:108px" width="12" height="32"><g fill="#6c707e"><circle cx="6" cy="5.5" r="2.6"/><circle cx="6" cy="16" r="2.6"/><circle cx="6" cy="26.5" r="2.6"/></g></svg>
<div id="crumbs" class="a"></div>
<div class="a" style="left:102.63px;top:1568.76px;font-family:'Liberation Sans';font-size:24.5px;line-height:24.5px;color:#6c707e;white-space:pre;transform-origin:0 0;transform:scaleX(1.1340);">&lt;anonymous&gt;()</div>
<svg class="a" style="left:318px;top:1572px" width="14" height="18"><path d="M4 3 L10 9 L4 15" fill="none" stroke="#a8abb4" stroke-width="1.6"/></svg>
<div class="a" style="left:346.01px;top:1568.76px;font-family:'Liberation Sans';font-size:24.5px;line-height:24.5px;color:#6c707e;white-space:pre;transform-origin:0 0;transform:scaleX(1.1474);">callback for $(document).ready()</div>
<div id="status" class="a"></div>
<div class="a" style="left:28px;top:1626px;width:16px;height:16px;border:2px solid #3574f0;border-radius:4px;background:#e7eefc"></div>
<div class="a" style="left:51.43px;top:1619.12px;font-family:'Liberation Sans';font-size:27.5px;line-height:27.5px;color:#5f6371;white-space:pre;transform-origin:0 0;transform:scaleX(1.0563);">project</div>
<svg class="a" style="left:157px;top:1622px" width="14" height="20"><path d="M3 2.5 L11 10 L3 17.5" fill="none" stroke="#6c707e" stroke-width="1.8"/></svg>
<div class="a" style="left:187.95px;top:1619.12px;font-family:'Liberation Sans';font-size:27.5px;line-height:27.5px;color:#5f6371;white-space:pre;transform-origin:0 0;transform:scaleX(1.0451);">project</div>
<svg class="a" style="left:293px;top:1622px" width="14" height="20"><path d="M3 2.5 L11 10 L3 17.5" fill="none" stroke="#6c707e" stroke-width="1.8"/></svg>
<div class="a" style="left:324.54px;top:1619.12px;font-family:'Liberation Sans';font-size:27.5px;line-height:27.5px;color:#5f6371;white-space:pre;transform-origin:0 0;transform:scaleX(0.9469);">js</div>
<svg class="a" style="left:361px;top:1622px" width="14" height="20"><path d="M3 2.5 L11 10 L3 17.5" fill="none" stroke="#6c707e" stroke-width="1.8"/></svg>
<div class="a" style="left:396px;top:1621px;width:24px;height:24px;border-radius:4px;background:#f0a91e"></div>
<div class="a" style="left:399.5px;top:1626px;font-size:16.5px;line-height:16.5px;font-weight:bold;color:#1e1e1e;letter-spacing:-0.3px">JS</div>
<div class="a" style="left:432.44px;top:1619.12px;font-family:'Liberation Sans';font-size:27.5px;line-height:27.5px;color:#5f6371;white-space:pre;transform-origin:0 0;transform:scaleX(0.9983);">slider.js</div>
<div class="a" style="left:857.00px;top:1619.12px;font-family:'Liberation Sans';font-size:27.5px;line-height:27.5px;color:#5f6371;white-space:pre;transform-origin:0 0;transform:scaleX(0.9738);">PHP: 5.6</div>
<div class="a" style="left:996.41px;top:1619.12px;font-family:'Liberation Sans';font-size:27.5px;line-height:27.5px;color:#5f6371;white-space:pre;transform-origin:0 0;transform:scaleX(0.9950);">8:5</div>
<div class="a" style="left:1067.21px;top:1619.12px;font-family:'Liberation Sans';font-size:27.5px;line-height:27.5px;color:#5f6371;white-space:pre;transform-origin:0 0;transform:scaleX(0.9709);">LF</div>
<div class="a" style="left:1129.53px;top:1619.12px;font-family:'Liberation Sans';font-size:27.5px;line-height:27.5px;color:#5f6371;white-space:pre;transform-origin:0 0;transform:scaleX(1.0229);">UTF-8</div>
<div class="a" style="left:1370.56px;top:1619.12px;font-family:'Liberation Sans';font-size:27.5px;line-height:27.5px;color:#5f6371;white-space:pre;transform-origin:0 0;transform:scaleX(1.0162);">4 spaces</div>
<svg class="a" style="left:0;top:0" width="1584" height="1664"><g transform="translate(1258 1634) scale(0.75) translate(-42 -122)" fill="none" stroke="#6c707e" stroke-width="2.8" stroke-linecap="round"><path d="M42.31 120.57 C41.94 120.38 41.00 119.59 40.10 119.46 C39.20 119.33 37.84 119.25 36.94 119.78 C36.04 120.31 34.94 121.52 34.73 122.62 C34.52 123.73 34.78 125.36 35.68 126.41 C36.58 127.46 38.31 128.46 40.10 128.93 C41.89 129.40 44.31 129.67 46.41 129.25 C48.51 128.83 51.09 127.94 52.72 126.41 C54.35 124.88 55.93 122.31 56.19 120.10 C56.45 117.89 55.67 115.10 54.30 113.15 C52.93 111.20 50.62 109.42 47.99 108.42 C45.36 107.42 41.15 107.26 38.52 107.15 C35.89 107.05 33.83 107.42 32.20 107.79 C30.57 108.16 29.31 109.10 28.73 109.36"/><path d="M41.99 122.94 C42.36 123.15 43.36 124.15 44.20 124.20 C45.04 124.25 46.25 123.93 47.04 123.25 C47.83 122.57 48.88 121.26 48.93 120.10 C48.98 118.94 48.41 117.26 47.36 116.31 C46.31 115.36 44.46 114.73 42.62 114.41 C40.78 114.09 38.31 113.99 36.31 114.41 C34.31 114.83 32.10 115.68 30.63 116.94 C29.16 118.20 27.89 120.15 27.47 121.99 C27.05 123.83 27.31 126.20 28.10 127.99 C28.89 129.78 30.20 131.41 32.20 132.72 C34.20 134.03 37.47 135.35 40.10 135.88 C42.73 136.41 45.57 136.14 47.99 135.88 C50.41 135.62 53.52 134.56 54.62 134.30"/></g>
<path d="M1245.7 1646.1 L1270.4 1621.8" stroke="#f6f7f7" stroke-width="5"/><path d="M1245.7 1646.1 L1270.4 1621.8" stroke="#6c707e" stroke-width="2" stroke-linecap="round"/></svg>
<svg class="a" style="left:1305px;top:1616px" width="38" height="34"><g fill="none" stroke="#6c707e" stroke-width="2" stroke-linecap="round">
<path d="M8.8 14 C8.8 26 11 30.5 17.3 30.5 C23.6 30.5 25.8 26 25.8 14"/>
<path d="M12 12 Q12 5.5 17.5 5.5 Q20.5 5.5 22 8 M13 10 H21"/>
<path d="M2.5 20 H8.8 M25.8 20 H31.3 M4 11 L9 14 M4 28.5 L9 25 M26 25 L30 28.5"/></g>
<path d="M21.3 2.7 L32.7 13.1 M32.7 2.7 L21.3 13.1" stroke="#db3b4b" stroke-width="2.2"/></svg>
<svg class="a" style="left:1520px;top:1620px" width="30" height="28"><g fill="none" stroke="#6c707e" stroke-width="2.2" stroke-linecap="round"><rect x="2.5" y="11" width="18" height="14" rx="3"/><path d="M15.5 11 V8 Q15.5 2.5 21 2.5 Q26.5 2.5 26.5 8 V10 M10.5 15.5 V20"/></g></svg>
</body></html>
